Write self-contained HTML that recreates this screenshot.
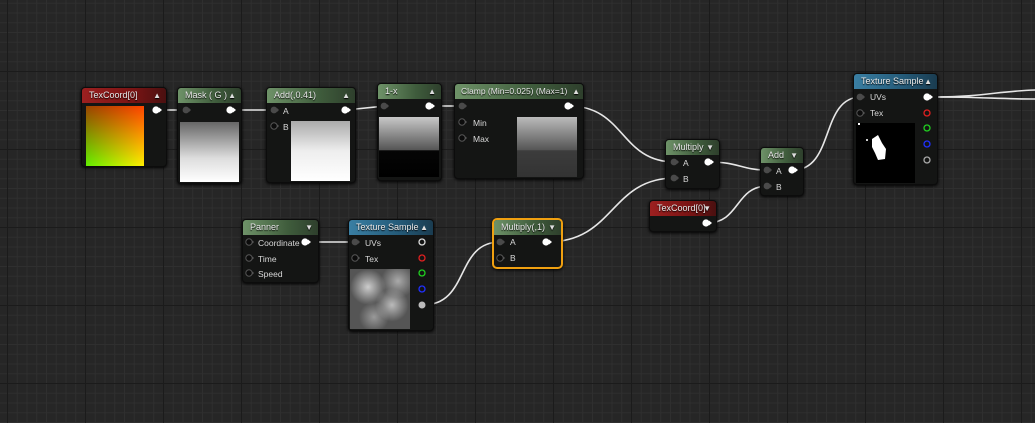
<!DOCTYPE html>
<html><head><meta charset="utf-8"><style>
*{margin:0;padding:0;box-sizing:border-box}
body{width:1035px;height:423px;overflow:hidden;position:relative;font-family:"Liberation Sans",sans-serif;
background-color:#262626;
background-image:
linear-gradient(90deg,#1b1b1b 1px,transparent 1px),
linear-gradient(0deg,#1b1b1b 1px,transparent 1px),
linear-gradient(90deg,#2f2f2f 1px,transparent 1px),
linear-gradient(0deg,#2f2f2f 1px,transparent 1px);
background-size:78px 78px,78px 78px,9.75px 9.75px,9.75px 9.75px;
background-position:7px 0,0 72px,7px 0,0 72px;}
.n{position:absolute;background:#141514;border:1px solid #0c0c0c;border-radius:4px;box-shadow:0 1px 3px #000;}
.h{height:15px;border-radius:3px 3px 0 0;color:#e8e8e8;font-size:9px;line-height:15px;padding-left:7px;position:relative;white-space:nowrap;text-shadow:0 1px 1px #000}
.g{background:linear-gradient(90deg,#6e9268,#3f5c3c 60%,#2e3f2c)}
.b{background:linear-gradient(90deg,#3a7fa3,#245a78 60%,#1a3c50)}
.r{background:linear-gradient(90deg,#9c2020,#7a1414 60%,#4a1010)}
.h i{position:absolute;right:5px;top:0;font-style:normal;font-size:8px;color:#ddd}
.l{position:absolute;font-size:8.5px;color:#d8d8d8}
.p{position:absolute}
</style></head><body>
<svg width="1035" height="423" style="position:absolute;left:0;top:0" fill="none" stroke="#e6e6e6" stroke-width="1.6">
<path d="M157 110H187"/><path d="M231 110H274"/><path d="M346 110L385 106"/><path d="M430 106H463"/>
<path d="M569 106C625 106 620 162 675 162"/>
<path d="M547 242C615 242 610 178 675 178"/>
<path d="M709 162C740 162 740 170 768 170"/>
<path d="M707 223C740 223 735 186 768 186"/>
<path d="M793 170C835 170 820 97 861 97"/>
<path d="M306 242H356"/>
<path d="M423 305C470 305 455 242 500 242"/>
<path d="M937 97C980 97 1000 91 1035 90"/><path d="M937 97C980 97 1000 99 1035 99"/>
</svg>

<div class="n" style="left:81px;top:87px;width:86px;height:80px"><div class="h r">TexCoord[0]<i>▲</i></div>
<div class="p" style="left:4px;top:18px;width:58px;height:60px;background:linear-gradient(90deg,#500,#f00),linear-gradient(180deg,#640,#1e0);background-blend-mode:screen"></div></div>

<div class="n" style="left:177px;top:87px;width:65px;height:97px"><div class="h g">Mask ( G )<i>▲</i></div>
<div class="p" style="left:2px;top:34px;width:59px;height:60px;background:linear-gradient(#666,#ddd 60%,#fff)"></div></div>

<div class="n" style="left:266px;top:87px;width:90px;height:96px"><div class="h g">Add(,0.41)<i>▲</i></div>
<div class="l" style="left:16px;top:18px">A</div><div class="l" style="left:16px;top:34px">B</div>
<div class="p" style="left:24px;top:33px;width:59px;height:60px;background:linear-gradient(#aaa,#eee 50%,#fff)"></div></div>

<div class="n" style="left:377px;top:83px;width:65px;height:98px"><div class="h g">1-x<i>▲</i></div>
<div class="p" style="left:1px;top:33px;width:60px;height:60px;background:linear-gradient(#c8c8c8,#555 55%,#050505 56%,#000)"></div></div>

<div class="n" style="left:454px;top:83px;width:130px;height:96px"><div class="h g" style="font-size:8.5px;padding-left:6px">Clamp (Min=0.025) (Max=1)<i style="right:3px">▲</i></div>
<div class="l" style="left:18px;top:34px">Min</div><div class="l" style="left:18px;top:50px">Max</div>
<div class="p" style="left:62px;top:33px;width:60px;height:60px;background:linear-gradient(#bbb,#555 55%,#3c3c3c 56%,#333)"></div></div>

<div class="n" style="left:665px;top:139px;width:55px;height:50px"><div class="h g">Multiply<i>▼</i></div>
<div class="l" style="left:17px;top:18px">A</div><div class="l" style="left:17px;top:34px">B</div></div>

<div class="n" style="left:760px;top:147px;width:44px;height:49px"><div class="h g">Add<i>▼</i></div>
<div class="l" style="left:15px;top:18px">A</div><div class="l" style="left:15px;top:34px">B</div></div>

<div class="n" style="left:649px;top:200px;width:68px;height:32px"><div class="h r">TexCoord[0]<i>▼</i></div></div>

<div class="n" style="left:853px;top:73px;width:85px;height:112px"><div class="h b">Texture Sample<i>▲</i></div>
<div class="l" style="left:16px;top:18px">UVs</div><div class="l" style="left:16px;top:34px">Tex</div>
<div class="p" style="left:2px;top:49px;width:59px;height:60px;background:#000"><svg width="59" height="60"><path d="M16 16L22 12L26 20L30 26L29 36L22 37L19 30L16 24Z" fill="#fff"/><rect x="2" y="0" width="2" height="2" fill="#fff"/><rect x="10" y="16" width="2" height="2" fill="#ccc"/></svg></div></div>

<div class="n" style="left:242px;top:219px;width:77px;height:64px"><div class="h g">Panner<i>▼</i></div>
<div class="l" style="left:15px;top:18px">Coordinate</div><div class="l" style="left:15px;top:34px">Time</div><div class="l" style="left:15px;top:49px">Speed</div></div>

<div class="n" style="left:348px;top:219px;width:86px;height:112px"><div class="h b">Texture Sample<i>▲</i></div>
<div class="l" style="left:16px;top:18px">UVs</div><div class="l" style="left:16px;top:34px">Tex</div>
<div class="p" style="left:1px;top:49px;width:60px;height:60px;background:radial-gradient(circle at 30% 30%,#ccc,transparent 30%),radial-gradient(circle at 70% 60%,#bbb,transparent 30%),radial-gradient(circle at 40% 80%,#999,transparent 25%),radial-gradient(circle at 80% 20%,#aaa,transparent 25%),#555"></div></div>

<div class="n" style="left:492px;top:218px;width:71px;height:51px;border:2px solid #f0a010;border-radius:5px"><div class="h g">Multiply(,1)<i>▼</i></div>
<div class="l" style="left:16px;top:17px">A</div><div class="l" style="left:16px;top:33px">B</div></div>

<svg width="1035" height="423" style="position:absolute;left:0;top:0">
<defs>
<g id="o"><circle r="3.6" fill="#fff"/><path d="M3 -2.5L6 0L3 2.5Z" fill="#fff"/></g>
<g id="ic"><circle r="3.4" fill="#4a4a4a"/><path d="M3 -2L5 0L3 2Z" fill="#4a4a4a"/></g>
<g id="iu"><circle r="3.2" fill="#0c0c0c" stroke="#555" stroke-width="1"/><path d="M3.5 -1.5L5 0L3.5 1.5Z" fill="#555"/></g>
</defs>
<use href="#o" x="156" y="110"/>
<use href="#ic" x="186" y="110"/><use href="#o" x="230" y="110"/>
<use href="#ic" x="274" y="110"/><use href="#iu" x="274" y="126"/><use href="#o" x="345" y="110"/>
<use href="#ic" x="384" y="106"/><use href="#o" x="429" y="106"/>
<use href="#ic" x="462" y="106"/><use href="#iu" x="462" y="122"/><use href="#iu" x="462" y="138"/><use href="#o" x="568" y="106"/>
<use href="#ic" x="674" y="162"/><use href="#ic" x="674" y="178"/><use href="#o" x="708" y="162"/>
<use href="#ic" x="767" y="170"/><use href="#ic" x="767" y="186"/><use href="#o" x="792" y="170"/>
<use href="#o" x="706" y="223"/>
<use href="#ic" x="860" y="97"/><use href="#iu" x="860" y="113"/><use href="#o" x="927" y="97"/>
<g fill="none" stroke-width="1.3"><circle cx="927" cy="113" r="3" stroke="#e02020"/><circle cx="927" cy="128" r="3" stroke="#20d020"/><circle cx="927" cy="144" r="3" stroke="#2030ff"/><circle cx="927" cy="160" r="3" stroke="#aaa"/>
<circle cx="422" cy="242" r="3" stroke="#ddd"/><circle cx="422" cy="258" r="3" stroke="#e02020"/><circle cx="422" cy="273" r="3" stroke="#20d020"/><circle cx="422" cy="289" r="3" stroke="#2030ff"/></g>
<circle cx="422" cy="305" r="3.5" fill="#bbb"/>
<use href="#iu" x="249" y="242"/><use href="#iu" x="249" y="258"/><use href="#iu" x="249" y="273"/><use href="#o" x="305" y="242"/>
<use href="#ic" x="355" y="242"/><use href="#iu" x="355" y="258"/>
<use href="#ic" x="500" y="242"/><use href="#iu" x="500" y="258"/><use href="#o" x="546" y="242"/>
</svg>
</body></html>
